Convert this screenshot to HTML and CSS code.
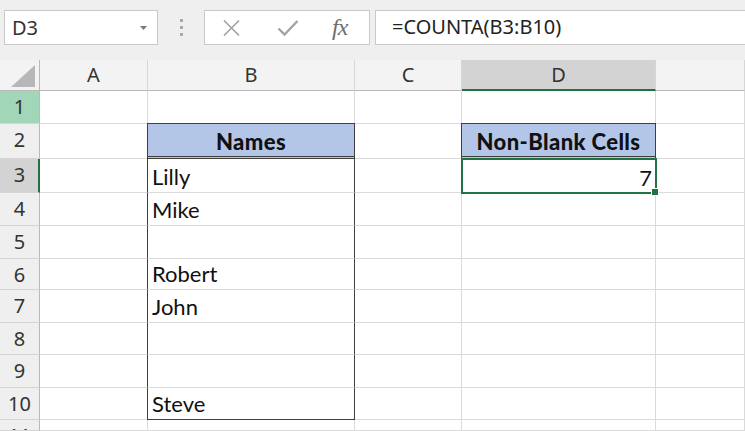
FILE: index.html
```html
<!DOCTYPE html>
<html>
<head>
<meta charset="utf-8">
<link rel="stylesheet" href="styles.css">
</head>
<body>
<div class="app">
  <div class="fbar">
    <div class="namebox">
      <span class="nb-text">D3</span>
      <svg class="caret" width="7" height="4" viewBox="0 0 7 4"><path d="M0 0H7L3.5 4Z" fill="#7a7a7a"/></svg>
    </div>
    <div class="grip"><i></i><i></i><i></i></div>
    <div class="fxbox">
      <svg class="ico" width="20" height="18" viewBox="0 0 20 18"><path d="M2 1.5L17 16.5M17 1.5L2 16.5" stroke="#a3a3a3" stroke-width="1.7" fill="none"/></svg>
      <svg class="ico" width="22" height="18" viewBox="0 0 22 18"><path d="M1.5 9.5L7.5 15.5L20.5 2" stroke="#a3a3a3" stroke-width="2.4" fill="none"/></svg>
      <span class="fx">fx</span>
    </div>
    <div class="formula">=COUNTA(B3:B10)</div>
  </div>
  <div class="sheet">
    <div class="ch corner"><svg width="24" height="22" viewBox="0 0 24 22"><path d="M24 0V22H0Z" fill="#b7b7b7"/></svg></div>
    <div class="ch">A</div>
    <div class="ch">B</div>
    <div class="ch">C</div>
    <div class="ch ch-sel">D</div>
    <div class="ch"></div>

    <div class="rh rh-green">1</div>
    <div class="c"></div><div class="c"></div><div class="c"></div><div class="c"></div><div class="c"></div>

    <div class="rh">2</div>
    <div class="c"></div>
    <div class="c th">Names</div>
    <div class="c"></div>
    <div class="c th">Non-Blank Cells</div>
    <div class="c"></div>

    <div class="rh rh-sel">3</div>
    <div class="c"></div>
    <div class="c tb">Lilly</div>
    <div class="c"></div>
    <div class="c sel num">7</div>
    <div class="c"></div>

    <div class="rh">4</div>
    <div class="c"></div>
    <div class="c tb">Mike</div>
    <div class="c"></div><div class="c"></div><div class="c"></div>

    <div class="rh">5</div>
    <div class="c"></div>
    <div class="c tb"></div>
    <div class="c"></div><div class="c"></div><div class="c"></div>

    <div class="rh">6</div>
    <div class="c"></div>
    <div class="c tb">Robert</div>
    <div class="c"></div><div class="c"></div><div class="c"></div>

    <div class="rh">7</div>
    <div class="c"></div>
    <div class="c tb">John</div>
    <div class="c"></div><div class="c"></div><div class="c"></div>

    <div class="rh">8</div>
    <div class="c"></div>
    <div class="c tb"></div>
    <div class="c"></div><div class="c"></div><div class="c"></div>

    <div class="rh">9</div>
    <div class="c"></div>
    <div class="c tb"></div>
    <div class="c"></div><div class="c"></div><div class="c"></div>

    <div class="rh">10</div>
    <div class="c"></div>
    <div class="c tb tb-last">Steve</div>
    <div class="c"></div><div class="c"></div><div class="c"></div>

    <div class="rh">11</div>
    <div class="c"></div><div class="c"></div><div class="c"></div><div class="c"></div><div class="c"></div>
  </div>
</div>
</body>
</html>
```
FILE: styles.css
```css
html, body {
  margin: 0;
  padding: 0;
  background: #ffffff;
}
* { box-sizing: border-box; }

.app {
  width: 745px;
  height: 431px;
  overflow: hidden;
}

/* formula bar */
.fbar {
  height: 60px;
  background: #efefef;
  display: flex;
  align-items: flex-start;
  padding: 10px 0 0 4px;
  font-family: "Noto Sans", "Open Sans", sans-serif;
}
.namebox {
  width: 154px;
  height: 35px;
  background: #fff;
  border: 1px solid #c9c9c9;
  display: flex;
  align-items: center;
  justify-content: space-between;
  padding: 0 10px 0 7px;
}
.nb-text {
  font-size: 20px;
  color: #333;
}
.caret { margin-top: 1px; }
.grip {
  width: 46px;
  height: 35px;
  display: flex;
  flex-direction: column;
  align-items: center;
  justify-content: center;
  gap: 4px;
}
.grip i {
  display: block;
  width: 3px;
  height: 3px;
  background: #a9a9a9;
}
.fxbox {
  width: 166px;
  height: 35px;
  background: #fff;
  border: 1px solid #c9c9c9;
  display: flex;
  align-items: center;
  padding-left: 17px;
  gap: 35px;
}
.fx {
  font-family: "Liberation Serif", serif;
  font-style: italic;
  font-size: 24px;
  color: #6e6e6e;
  letter-spacing: -1px;
  margin-left: -2px;
}
.formula {
  flex: 1;
  margin-left: 5px;
  height: 35px;
  background: #fff;
  border: 1px solid #c9c9c9;
  border-right: none;
  padding-left: 16px;
  font-size: 20px;
  line-height: 32px;
  color: #222;
}

/* sheet */
.sheet {
  display: grid;
  grid-template-columns: 40px 108px 207px 107px 194px 89px;
  grid-template-rows: 31px 33px 35px 34px 33px 33px 31px 33px 32px 33px 32px 11px;
}
.ch {
  background: #f3f3f3;
  border-right: 1px solid #d6d6d6;
  border-bottom: 1px solid #b9b9b9;
  font-family: "Noto Sans", "Open Sans", sans-serif;
  font-size: 20px;
  color: #333;
  text-align: center;
  line-height: 30px;
}
.corner {
  display: flex;
  align-items: flex-end;
  justify-content: flex-end;
  padding: 0 4px 3px 0;
  border-right: 1px solid #b9b9b9;
}
.corner svg { display: block; }
.ch-sel {
  background: #d3d3d3;
  border-bottom: 2px solid #217346;
  line-height: 29px;
}
.rh {
  background: #efefef;
  border-right: 1px solid #b9b9b9;
  border-bottom: 1px solid #d4d4d4;
  font-family: "Noto Sans", "Open Sans", sans-serif;
  font-size: 20px;
  color: #333;
  text-align: center;
  line-height: 31px;
  overflow: hidden;
}
.rh-green { background: #a2d6b8; }
.rh-sel {
  background: #d3d3d3;
  border-right: 2px solid #217346;
  padding-left: 1px;
}
.c {
  background: #fff;
  border-right: 1px solid #dadada;
  border-bottom: 1px solid #dadada;
  font-family: "Lato", "Liberation Sans", sans-serif;
  font-size: 22px;
  line-height: 1.2;
  color: #111;
  display: flex;
  align-items: flex-end;
  padding: 0 4px 2px 4px;
  overflow: visible;
  white-space: nowrap;
}
.th {
  margin: -1px 0 0 -1px;
  background: #b4c6e7;
  border: 1px solid #3f3f3f;
  border-bottom: 3px double #3f3f3f;
  justify-content: center;
  font-weight: 900;
  letter-spacing: 0.4px;
  padding-bottom: 1px;
}
.tb {
  margin-left: -1px;
  border-left: 1px solid #3f3f3f;
  border-right: 1px solid #3f3f3f;
  padding-left: 4px;
}
.tb-last { border-bottom: 1px solid #3f3f3f; }
.sel {
  margin: -1px;
  border: 2px solid #217346;
  position: relative;
  z-index: 2;
  justify-content: flex-end;
  padding: 0 3px 1px 4px;
}
.sel::after {
  content: "";
  position: absolute;
  right: -4px;
  bottom: -4px;
  width: 6px;
  height: 6px;
  background: #217346;
  border: 1px solid #fff;
}
```
